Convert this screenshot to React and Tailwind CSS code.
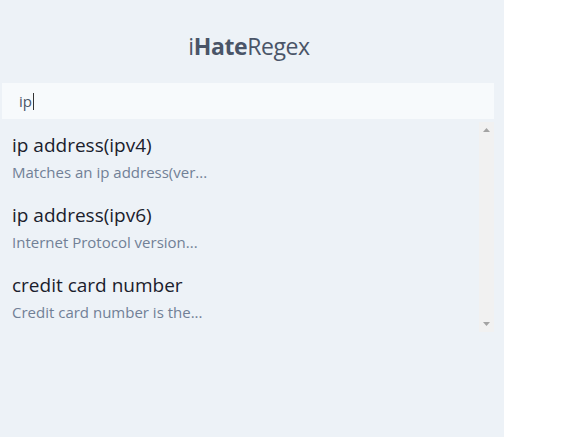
import React from "react";

const items = [
  { t: "ip address(ipv4)", d: "Matches an ip address(ver..." },
  { t: "ip address(ipv6)", d: "Internet Protocol version..." },
  { t: "credit card number", d: "Credit card number is the..." },
];

export default function App() {
  return (
    <div className="w-[566px] h-[437px] bg-white flex" style={{ fontFamily: '"Open Sans", "Noto Sans", sans-serif' }}>
      <div className="w-[504px] h-full bg-[#edf2f7] flex flex-col">
        <div className="h-[83px] flex items-center justify-center pt-[9px]">
          <h1 className="text-[23px] text-[#4a5568] tracking-[-0.4px] -translate-x-[3px]">
            i<span className="font-bold">Hate</span>Regex
          </h1>
        </div>
        <div className="mx-[2px] mr-[10px] h-[36px] bg-[#f7fafc] flex items-center pl-[17px] text-[15px] text-[#4a5568]">
          ip<span className="inline-block w-px h-[17px] bg-[#333] ml-px"></span>
        </div>
        <div className="mt-[3px] mr-[10px] h-[210px] flex overflow-hidden">
          <div className="flex-1 flex flex-col pt-[3px]">
            {items.map((it) => (
              <div key={it.t} className="h-[70px] shrink-0 pl-[12px] flex flex-col pt-[8px]">
                <div className="text-[19px] leading-[24px] text-[#1a202c]">{it.t}</div>
                <div className="text-[15px] leading-[24px] mt-[3px] text-[#718096]">{it.d}</div>
              </div>
            ))}
          </div>
          <div className="w-[15px] bg-[#f1f1f1] flex flex-col justify-between items-center py-[6px]">
            <svg width="7" height="4" viewBox="0 0 7 4"><path d="M3.5 0L7 4H0z" fill="#a3a3a3" /></svg>
            <svg width="7" height="4" viewBox="0 0 7 4"><path d="M0 0H7L3.5 4z" fill="#a3a3a3" /></svg>
          </div>
        </div>
      </div>
    </div>
  );
}
